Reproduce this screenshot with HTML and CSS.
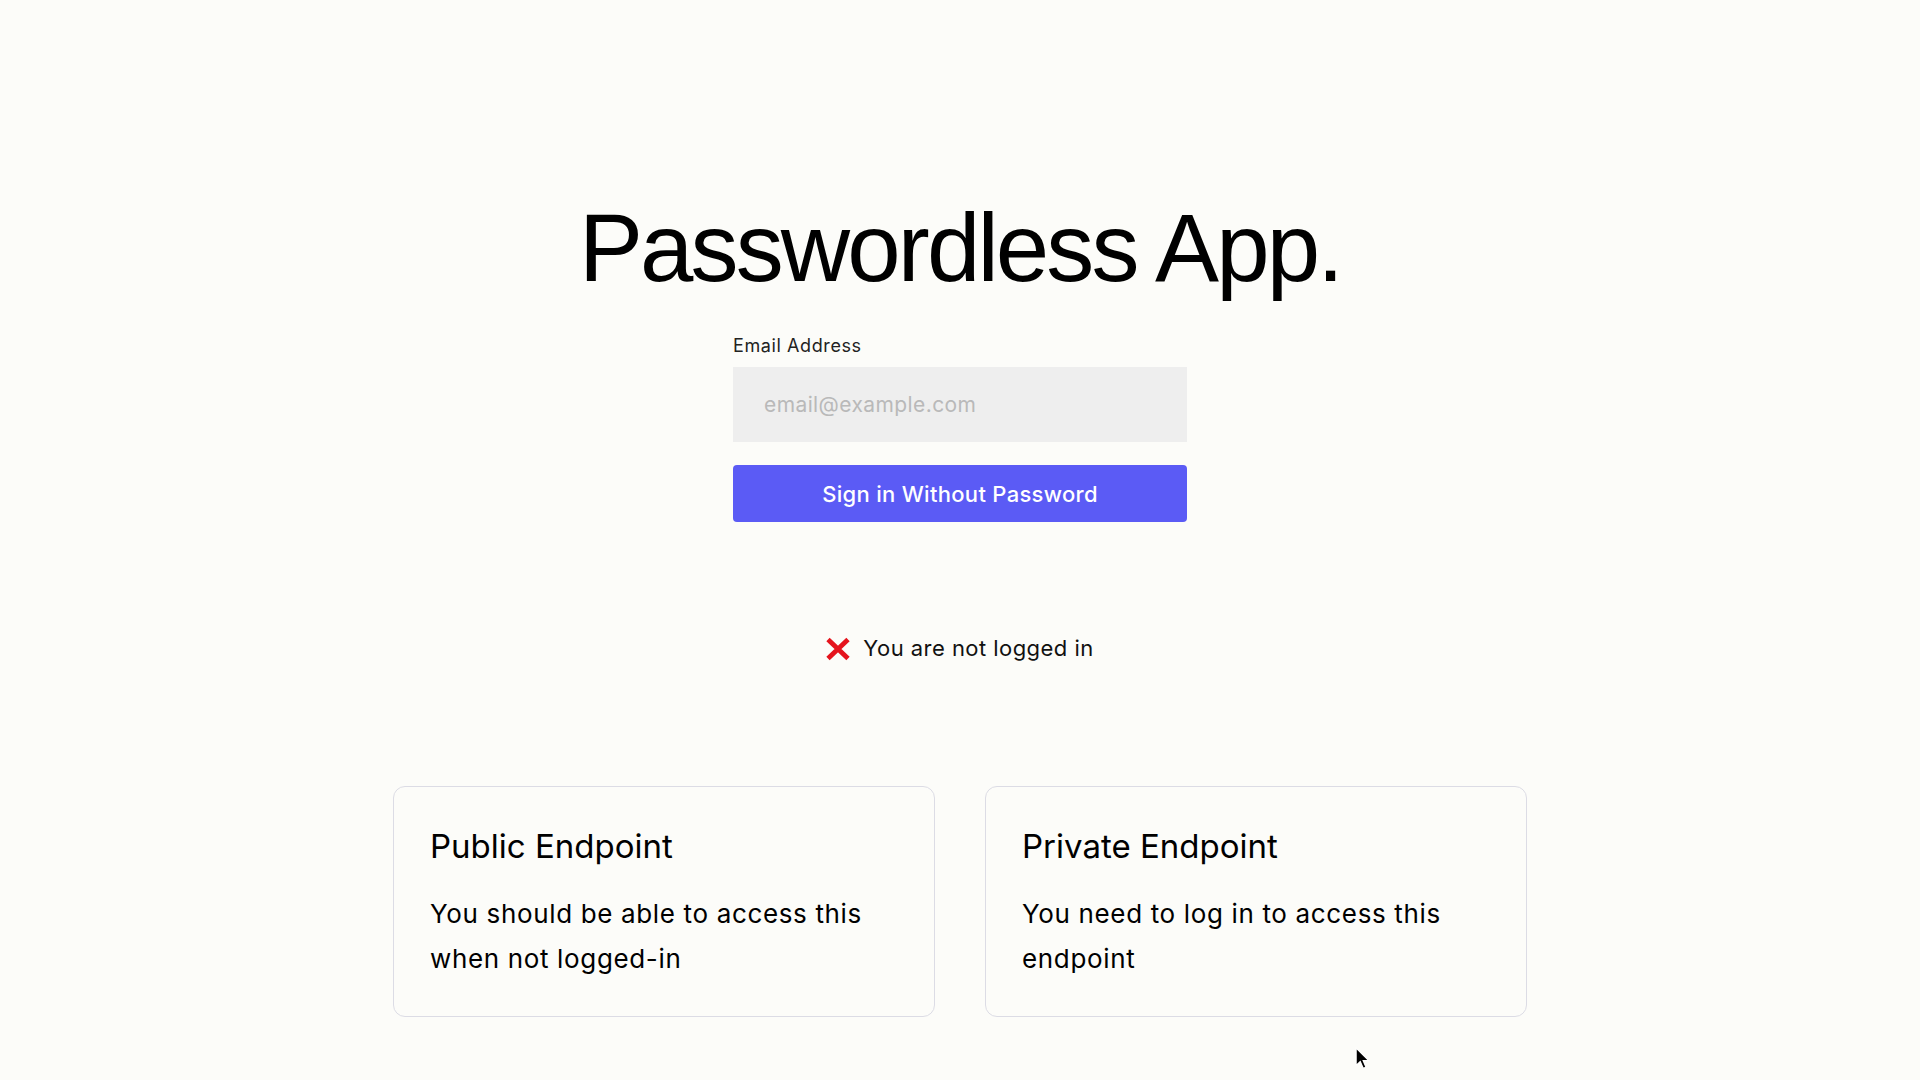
FILE: index.html
```html
<!DOCTYPE html>
<html lang="en">
<head>
  <meta charset="UTF-8"/>
  <meta name="viewport" content="width=device-width, initial-scale=1.0"/>
  <title>Passwordless App</title>
  <link rel="stylesheet" href="styles.css">
</head>
<body>

<main class="page">
  <h1 class="title">Passwordless App.</h1>

  <form class="login" onsubmit="return false">
    <label class="field-label" for="email">Email Address</label>
    <input class="field-input" id="email" type="email" placeholder="email@example.com"/>
    <button class="btn-primary" type="submit">Sign in Without Password</button>
  </form>

  <p class="status">
    <svg class="status-icon" viewBox="0 0 24 24" width="24" height="24" aria-hidden="true">
      <path d="M2 2.5 L22 21.5 M22 2.5 L2 21.5" stroke="#e5141d" stroke-width="4.8" fill="none"/>
    </svg>
    <span>You are not logged in</span>
  </p>

  <section class="cards">
    <div class="card">
      <h2>Public Endpoint</h2>
      <p>You should be able to access this when not logged-in</p>
    </div>
    <div class="card">
      <h2>Private Endpoint</h2>
      <p>You need to log in to access this endpoint</p>
    </div>
  </section>
</main>

<svg class="cursor" viewBox="0 0 14 20" width="16" height="23" aria-hidden="true">
  <path d="M1 1 L1 16 L4.6 12.6 L7.2 18.6 L9.6 17.6 L7.1 11.8 L12 11.8 Z" fill="#000" stroke="#fff" stroke-width="1"/>
</svg>

</body>
</html>
```

FILE: styles.css
```css
body {
  margin: 0;
  font-family: Inter, "Noto Sans", sans-serif;
  background: #fcfcf9;
  color: #111;
  position: relative;
  min-height: 1080px;
}
.page {
  padding-top: 200px;
  display: flex;
  flex-direction: column;
  align-items: center;
}
.title {
  margin: 0;
  font-family: "Liberation Sans", Arial, sans-serif;
  font-size: 96px;
  font-weight: 400;
  line-height: 1;
  letter-spacing: -0.03em;
  color: #000;
}
.login {
  width: 454px;
  margin-top: 36px;
  display: flex;
  flex-direction: column;
}
.field-label {
  font-size: 18px;
  line-height: 27px;
  letter-spacing: 0.6px;
  color: #222;
}
.field-input {
  margin-top: 8px;
  height: 75px;
  box-sizing: border-box;
  border: none;
  background: #eeeeee;
  padding: 0 31px;
  font-family: Inter, sans-serif;
  font-size: 21px;
  letter-spacing: 0.4px;
  color: #333;
  outline: none;
}
.field-input::placeholder {
  color: #b9b9b9;
}
.btn-primary {
  margin-top: 23px;
  height: 57px;
  border: none;
  border-radius: 4px;
  background: #5b5bf5;
  color: #fff;
  font-family: Inter, sans-serif;
  font-size: 22px;
  font-weight: 500;
  letter-spacing: 0.3px;
  cursor: pointer;
}
.status {
  margin: 110px 0 0;
  display: flex;
  align-items: center;
  gap: 13px;
  font-size: 22px;
  line-height: 33px;
  letter-spacing: 0.45px;
  color: #111;
}
.status-icon {
  display: block;
}
.cards {
  margin-top: 121px;
  display: grid;
  grid-template-columns: 542px 542px;
  gap: 50px;
}
.card {
  border: 1px solid #dcdce5;
  border-radius: 12px;
  padding: 39px 36px 35px;
}
.card h2 {
  margin: 0;
  font-size: 33px;
  font-weight: 400;
  line-height: 40px;
  color: #000;
}
.card p {
  margin: 25px 0 0;
  font-size: 26px;
  line-height: 45px;
  letter-spacing: 0.65px;
  color: #000;
}
.cursor {
  position: absolute;
  left: 1355px;
  top: 1047px;
}
```
